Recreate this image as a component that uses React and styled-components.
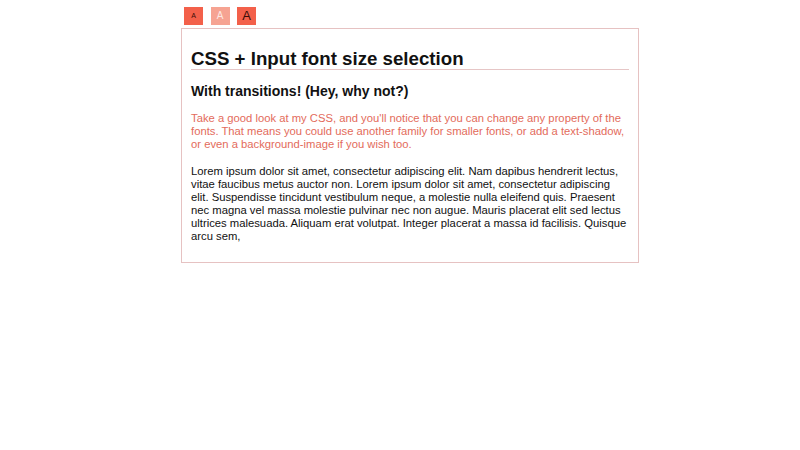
import React, { useState } from "react";
import styled, { createGlobalStyle } from "styled-components";

const Global = createGlobalStyle`
  html, body { margin: 0; padding: 0; background: #fff; }
  body { font-family: "Liberation Sans", Arial, sans-serif; color: #111; }
`;

const Page = styled.div`
  width: 458px;
  margin-left: 181px;
  padding-top: 7px;
`;

const SizeBar = styled.div`
  display: flex;
  gap: 7.5px;
  padding-left: 3px;
  margin-bottom: 3px;
`;

const SizeButton = styled.button`
  width: 19px;
  height: 18px;
  padding: 0;
  border: none;
  background: ${(p) => (p.$active ? "#f6a392" : "#f3604a")};
  color: ${(p) => (p.$active ? "#fde8e2" : "#3a0d08")};
  font-family: "Liberation Sans", Arial, sans-serif;
  font-size: ${(p) => p.$glyph}px;
  line-height: 18px;
  cursor: pointer;
  display: flex;
  align-items: center;
  justify-content: center;
`;

const Card = styled.div`
  box-sizing: border-box;
  height: 235px;
  border: 1px solid #e6c2c2;
  padding: 10px 9px;
`;

const Title = styled.h1`
  margin: 10px 0 0;
  font-size: 18.7px;
  font-weight: bold;
  line-height: 19.6px;
  border-bottom: 1px solid #e6c6c6;
`;

const Subtitle = styled.h2`
  margin: 13px 0 0;
  font-size: 14px;
  font-weight: bold;
  line-height: 16px;
`;

const Note = styled.p`
  margin: 13.5px 0 0;
  color: #e36b5b;
  font-size: ${(p) => p.$size}px;
  line-height: 12.8px;
  transition: font-size 0.3s ease;
`;

const Body = styled.p`
  margin: 15px 0 0;
  font-size: ${(p) => p.$size}px;
  line-height: 12.9px;
  transition: font-size 0.3s ease;
`;

const sizes = [
  { key: "s", glyph: 7, note: 9.5, body: 9.6 },
  { key: "m", glyph: 10, note: 11.25, body: 11.28 },
  { key: "l", glyph: 13, note: 13, body: 13.1 },
];

export default function App() {
  const [size, setSize] = useState("m");
  const current = sizes.find((s) => s.key === size);
  return (
    <>
      <Global />
      <Page>
        <SizeBar>
          {sizes.map((s) => (
            <SizeButton
              key={s.key}
              $glyph={s.glyph}
              $active={s.key === size}
              onClick={() => setSize(s.key)}
            >
              A
            </SizeButton>
          ))}
        </SizeBar>
        <Card>
          <Title>CSS + Input font size selection</Title>
          <Subtitle>With transitions! (Hey, why not?)</Subtitle>
          <Note $size={current.note}>
            Take a good look at my CSS, and you'll notice that you can change any
            property of the fonts. That means you could use another family for
            smaller fonts, or add a text-shadow, or even a background-image if you
            wish too.
          </Note>
          <Body $size={current.body}>
            Lorem ipsum dolor sit amet, consectetur adipiscing elit. Nam dapibus
            hendrerit lectus, vitae faucibus metus auctor non. Lorem ipsum dolor
            sit amet, consectetur adipiscing elit. Suspendisse tincidunt vestibulum
            neque, a molestie nulla eleifend quis. Praesent nec magna vel massa
            molestie pulvinar nec non augue. Mauris placerat elit sed lectus
            ultrices malesuada. Aliquam erat volutpat. Integer placerat a massa id
            facilisis. Quisque arcu sem,
          </Body>
        </Card>
      </Page>
    </>
  );
}
